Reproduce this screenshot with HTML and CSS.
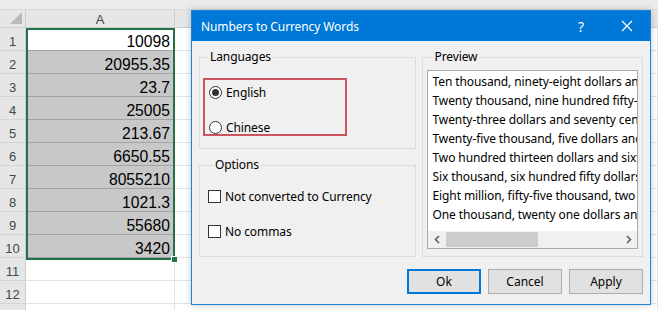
FILE: index.html
```html
<!DOCTYPE html>
<html lang="en">
<head>
	<meta charset="UTF-8">
	<title>Numbers to Currency Words</title>
	<link rel="stylesheet" href="styles.css">
</head>
<body>
	<div class="sheet">
		<div class="ribbon"></div>
		<div class="grid">
			<div class="corner"><span class="tri"></span></div>
			<div class="colhead">A</div>
			<div class="colhead last"></div>

			<div class="rowhead">1</div><div class="cell active">10098</div><div class="cell blank"></div>
			<div class="rowhead">2</div><div class="cell">20955.35</div><div class="cell blank"></div>
			<div class="rowhead">3</div><div class="cell">23.7</div><div class="cell blank"></div>
			<div class="rowhead">4</div><div class="cell">25005</div><div class="cell blank"></div>
			<div class="rowhead">5</div><div class="cell">213.67</div><div class="cell blank"></div>
			<div class="rowhead">6</div><div class="cell">6650.55</div><div class="cell blank"></div>
			<div class="rowhead">7</div><div class="cell">8055210</div><div class="cell blank"></div>
			<div class="rowhead">8</div><div class="cell">1021.3</div><div class="cell blank"></div>
			<div class="rowhead">9</div><div class="cell">55680</div><div class="cell blank"></div>
			<div class="rowhead">10</div><div class="cell">3420</div><div class="cell blank"></div>
			<div class="rowhead">11</div><div class="cell blank"></div><div class="cell blank"></div>
			<div class="rowhead">12</div><div class="cell blank"></div><div class="cell blank"></div>
			<div class="rowhead">13</div><div class="cell blank"></div><div class="cell blank"></div>

			<!-- selection range A1:A10 -->
			<div class="selection"><span class="handle"></span></div>
		</div>
	</div>

	<div class="dialog">
		<div class="titlebar">
			<span class="title">Numbers to Currency Words</span>
			<span class="tbtn help">?</span>
			<span class="tbtn">
				<svg width="12" height="12" viewBox="0 0 12 12"><path d="M1 1 L11 11 M11 1 L1 11" stroke="#fff" stroke-width="1.2" fill="none"/></svg>
			</span>
		</div>
		<div class="dbody">
			<div class="cols">
				<div class="leftcol">
					<fieldset class="group lang">
						<legend>Languages</legend>
						<div class="mark">
							<label class="opt"><span class="radio on"></span>English</label>
							<label class="opt"><span class="radio"></span>Chinese</label>
						</div>
					</fieldset>
					<fieldset class="group opts">
						<legend>Options</legend>
						<label class="opt"><span class="check"></span>Not converted to Currency</label>
						<label class="opt"><span class="check"></span>No commas</label>
					</fieldset>
				</div>
				<fieldset class="group preview">
					<legend>Preview</legend>
					<div class="listbox">
						<div class="lines">
							<div>Ten thousand, ninety-eight dollars and no cents</div>
							<div>Twenty thousand, nine hundred fifty-five dollars and thirty-five cents</div>
							<div>Twenty-three dollars and seventy cents</div>
							<div>Twenty-five thousand, five dollars and no cents</div>
							<div>Two hundred thirteen dollars and sixty-seven cents</div>
							<div>Six thousand, six hundred fifty dollars and fifty-five cents</div>
							<div>Eight million, fifty-five thousand, two hundred ten dollars and no cents</div>
							<div>One thousand, twenty one dollars and thirty cents</div>
						</div>
						<div class="hscroll">
							<span class="arrow">
								<svg width="6" height="9" viewBox="0 0 6 9"><path d="M5 1 L1.5 4.5 L5 8" stroke="#606060" stroke-width="1.6" fill="none"/></svg>
							</span>
							<div class="track"><span class="thumb"></span></div>
							<span class="arrow">
								<svg width="6" height="9" viewBox="0 0 6 9"><path d="M1 1 L4.5 4.5 L1 8" stroke="#606060" stroke-width="1.6" fill="none"/></svg>
							</span>
						</div>
					</div>
				</fieldset>
			</div>
			<div class="buttons">
				<button class="btn default">Ok</button>
				<button class="btn">Cancel</button>
				<button class="btn">Apply</button>
			</div>
		</div>
	</div>
</body>
</html>
```

FILE: styles.css
```css
body{
	margin:0;
	width:658px;
	height:310px;
	overflow:hidden;
	position:relative;
	background:#fff;
	font-family:"Noto Sans", sans-serif;
}

/* 表格部分 */
.ribbon{
	height:10px;
	background:#ebebeb;
	border-bottom:1px solid #dadada;
	box-sizing:border-box;
}
.grid{
	display:grid;
	grid-template-columns:26px 149px 1fr;
	grid-template-rows:18px;
	grid-auto-rows:23px;
	position:relative;
}
.corner{
	background:#e6e6e6;
	border-right:1px solid #cfcfcf;
	border-bottom:1px solid #cfcfcf;
	box-sizing:border-box;
	position:relative;
}
.tri{
	position:absolute;
	right:3px;
	bottom:3px;
	width:0;
	height:0;
	border-left:12px solid transparent;
	border-bottom:12px solid #b9b9b9;
}
.colhead{
	background:#e6e6e6;
	border-right:1px solid #cfcfcf;
	border-bottom:1px solid #cfcfcf;
	box-sizing:border-box;
	text-align:center;
	font-family:"Liberation Sans", sans-serif;
	font-size:13px;
	line-height:16px;
	padding-top:2px;
	color:#444;
}
.colhead.last{
	border-right:none;
}
.rowhead{
	background:#e6e6e6;
	border-right:1px solid #cfcfcf;
	border-bottom:1px solid #d4d4d4;
	box-sizing:border-box;
	text-align:center;
	font-family:"Liberation Sans", sans-serif;
	font-size:13px;
	line-height:20px;
	padding-top:4px;
	color:#3c4a48;
}
.cell{
	background:#c8c8c8;
	border-bottom:1px solid #a3a3a3;
	box-sizing:border-box;
	text-align:right;
	padding:3px 5px 0 0;
	font-family:"Liberation Sans", sans-serif;
	font-size:15.7px;
	line-height:21px;
	color:#000;
}
.cell.active{
	background:#fff;
}
.cell.blank{
	background:#fff;
	border-bottom:1px solid #e2e2e2;
	border-right:1px solid #e2e2e2;
}
.selection{
	position:absolute;
	left:26px;
	top:18px;
	width:149px;
	height:232px;
	border:2px solid #217346;
	box-sizing:border-box;
}
.handle{
	position:absolute;
	right:-5px;
	bottom:-5px;
	width:5px;
	height:5px;
	background:#217346;
	border:1px solid #fff;
}

/* 对话框 */
.dialog{
	position:absolute;
	left:191px;
	top:10px;
	width:460px;
	height:295px;
	border:1px solid #1c84d8;
	box-sizing:border-box;
	background:#f0f0f0;
	box-shadow:0 0 7px rgba(0,0,0,0.22);
	color:#000;
	font-size:12px;
	letter-spacing:-0.1px;
}
.titlebar{
	height:30px;
	background:#0078d7;
	display:flex;
	align-items:center;
	color:#fff;
}
.title{
	padding-left:9px;
	flex:1;
	font-size:12px;
}
.tbtn{
	width:46px;
	height:30px;
	display:flex;
	align-items:center;
	justify-content:center;
}
.help{
	font-size:14px;
}
.dbody{
	padding:8px 7px 0 7px;
}
.cols{
	display:flex;
	gap:6px;
}
.leftcol{
	width:218px;
	display:flex;
	flex-direction:column;
	gap:8px;
}
.group{
	margin:0;
	padding:0 3px;
	border:1px solid #dcdcdc;
	box-sizing:border-box;
	min-width:0;
}
.group legend{
	margin-left:5px;
	padding:0 2px;
	line-height:16px;
}
.lang{
	height:100px;
}
.opts{
	height:100px;
	padding-left:8px;
	padding-top:13px;
}
.preview{
	width:221px;
	height:208px;
	padding:5px 4px 0 4px;
}
.mark{
	margin-top:13px;
	width:144px;
	height:58px;
	border:2px solid #cd5561;
	box-sizing:border-box;
	padding:2px 0 0 4px;
}
.opt{
	display:flex;
	align-items:center;
	height:20px;
	gap:4px;
}
.mark .opt + .opt{
	margin-top:15px;
}
.opts .opt + .opt{
	margin-top:15px;
}
.radio{
	width:13px;
	height:13px;
	border:1px solid #333;
	border-radius:50%;
	background:#fff;
	box-sizing:border-box;
	position:relative;
}
.radio.on::after{
	content:"";
	position:absolute;
	left:2px;
	top:2px;
	width:7px;
	height:7px;
	border-radius:50%;
	background:#333;
}
.check{
	width:13px;
	height:13px;
	border:1px solid #333;
	background:#fff;
	box-sizing:border-box;
}
.listbox{
	height:179px;
	border:1px solid #a9a9a9;
	background:#fff;
	box-sizing:border-box;
	display:flex;
	flex-direction:column;
}
.lines{
	flex:1;
	overflow:hidden;
	padding:1px 0 0 4px;
	white-space:nowrap;
	line-height:19px;
	color:#000;
}
.hscroll{
	height:17px;
	background:#f0f0f0;
	display:flex;
	align-items:center;
}
.arrow{
	width:17px;
	height:17px;
	display:flex;
	align-items:center;
	justify-content:center;
}
.track{
	flex:1;
	height:15px;
}
.thumb{
	display:block;
	width:92px;
	height:15px;
	margin-left:1px;
	background:#cdcdcd;
}
.buttons{
	display:flex;
	justify-content:flex-end;
	gap:7px;
	margin-top:12px;
	padding-right:0;
}
.btn{
	width:74px;
	height:25px;
	border:1px solid #adadad;
	background:#e1e1e1;
	font-family:"Noto Sans", sans-serif;
	font-size:12px;
	color:#000;
	padding:0;
}
.btn.default{
	border:2px solid #0078d7;
}
```
